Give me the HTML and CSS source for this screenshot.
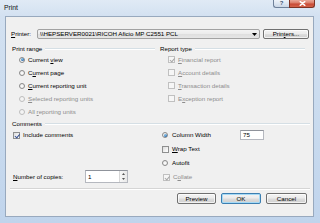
FILE: index.html
```html
<!DOCTYPE html>
<html>
<head>
<meta charset="utf-8">
<title>Print</title>
<link rel="stylesheet" href="styles.css">
</head>
<body>
<div class="window">
  <div class="titlebar">
    <span class="title">Print</span>
    <div class="caption">
      <span class="cap-btn help">?</span>
      <span class="cap-btn close"><svg class="close-x" width="7" height="5" viewBox="0 0 7 5"><path d="M1.2 0.6 L5.8 4.4 M5.8 0.6 L1.2 4.4" stroke="#fff" stroke-width="1.4" stroke-linecap="round"/></svg></span>
    </div>
  </div>
  <div class="client">
    <div class="printer-row">
      <span class="printer-label"><u>P</u>rinter:</span>
      <div class="combo">
        <span class="combo-text">\\HEPSERVER0021\RICOH Aficio MP C2551 PCL</span>
        <svg class="combo-arrow" width="5" height="3" viewBox="0 0 5 3"><path d="M0 0 H5 L2.5 3 Z" fill="#000"/></svg>
      </div>
      <span class="btn btn-printers">Prin<u>t</u>ers...</span>
    </div>

    <div class="groups">
      <div class="group group-range">
        <div class="group-head"><span class="head-label">Print range</span><span class="rule"></span></div>
        <div class="opt"><span class="radio on"></span><span>Current <u>v</u>iew</span></div>
        <div class="opt"><span class="radio"></span><span>C<u>u</u>rrent page</span></div>
        <div class="opt"><span class="radio"></span><span><u>C</u>urrent reporting unit</span></div>
        <div class="opt dis"><span class="radio"></span><span><u>S</u>elected reporting units</span></div>
        <div class="opt dis"><span class="radio"></span><span>All <u>r</u>eporting units</span></div>
      </div>
      <div class="group group-type">
        <div class="group-head"><span class="head-label">Report type</span><span class="rule"></span></div>
        <div class="opt dis"><span class="check on"></span><span><u>F</u>inancial report</span></div>
        <div class="opt dis"><span class="check"></span><span><u>A</u>ccount details</span></div>
        <div class="opt dis"><span class="check"></span><span><u>T</u>ransaction details</span></div>
        <div class="opt dis"><span class="check"></span><span>E<u>x</u>ception report</span></div>
      </div>
    </div>

    <div class="group-head comments-head"><span class="head-label">Comments</span><span class="rule"></span></div>
    <div class="comments">
      <div class="cell include"><span class="check on"></span><span>Include comments</span></div>
      <div class="cell colwidth"><span class="radio on"></span><span class="colwidth-label">Column Width</span><span class="field">75</span></div>
      <div class="cell wrap"><span class="check"></span><span><u>W</u>rap Text</span></div>
      <div class="cell autofit"><span class="radio"></span><span>Autofit</span></div>
      <div class="cell copies"><span class="copies-label"><u>N</u>umber of copies:</span>
        <span class="spin"><span class="spin-value">1</span><span class="spin-btns">
          <svg width="3" height="2" viewBox="0 0 3 2"><path d="M0 2 H3 L1.5 0 Z" fill="#555"/></svg>
          <svg width="3" height="2" viewBox="0 0 3 2"><path d="M0 0 H3 L1.5 2 Z" fill="#555"/></svg>
        </span></span>
      </div>
      <div class="cell collate dis"><span class="check on"></span><span>C<u>o</u>llate</span></div>
    </div>

    <div class="separator"></div>
    <div class="buttons">
      <span class="btn btn-preview">Preview</span>
      <span class="btn btn-ok">OK</span>
      <span class="btn btn-cancel">Cancel</span>
    </div>
  </div>
</div>
</body>
</html>
```

FILE: styles.css
```css
* { box-sizing: border-box; }

html, body {
  margin: 0;
  padding: 0;
}

body {
  width: 320px;
  height: 223px;
  overflow: hidden;
  font-family: "Liberation Sans", Arial, sans-serif;
  font-size: 6.2px;
  line-height: 8px;
  color: #000;
}

u { text-decoration: underline; text-underline-offset: 1px; }

.window {
  width: 320px;
  height: 223px;
  display: flex;
  flex-direction: column;
  background: linear-gradient(to bottom, #e0eaf5 0px, #d3e1f1 16px, #c8daee 60%, #c0d4ec 100%);
}

.titlebar {
  height: 16px;
  flex: none;
  display: flex;
  align-items: flex-start;
  padding-left: 4px;
}

.title {
  font-size: 6.8px;
  line-height: 8px;
  margin-top: 4px;
  color: #111;
}

.caption {
  margin-left: auto;
  margin-right: 5px;
  display: flex;
}

.cap-btn {
  height: 8px;
  display: flex;
  align-items: center;
  justify-content: center;
  border: 1px solid #6f819a;
  border-top: none;
}

.help {
  width: 16px;
  border-right: none;
  border-radius: 0 0 0 3px;
  background: linear-gradient(to bottom, #eef3f9 0%, #dde6f1 50%, #cbd7e6 100%);
  color: #3e5573;
  font-size: 6px;
  font-weight: bold;
  line-height: 7px;
}

.close {
  width: 26px;
  border-color: #7d3325;
  border-radius: 0 0 3px 0;
  background: linear-gradient(to bottom, #e9a899 0%, #db7a66 45%, #c84a35 55%, #d4624a 100%);
}

.close-x { display: block; }

.client {
  flex: 1;
  margin: 0 6px 6px 5px;
  background: #f0f0f0;
  border: 1px solid #98a9be;
  padding: 12px 3px 0 5px;
  display: flex;
  flex-direction: column;
}

/* printer row */
.printer-row {
  display: flex;
  align-items: center;
  height: 10px;
}

.printer-label {
  width: 26px;
  flex: none;
}

.combo {
  width: 223px;
  height: 10px;
  flex: none;
  display: flex;
  align-items: center;
  border: 1px solid #a2a2a2;
  border-radius: 2px;
  background: linear-gradient(to bottom, #f3f3f3 0%, #ebebeb 50%, #dedede 51%, #e6e6e6 100%);
  padding-left: 2px;
}

.combo-text {
  flex: 1;
  white-space: nowrap;
  overflow: hidden;
}

.combo-arrow {
  margin-right: 2px;
  flex: none;
}

.btn {
  height: 11px;
  display: flex;
  align-items: center;
  justify-content: center;
  border: 1px solid #707070;
  border-radius: 2px;
  background: linear-gradient(to bottom, #f3f3f3 0%, #ebebeb 48%, #dddddd 52%, #cfcfcf 100%);
  box-shadow: inset 0 0 0 1px rgba(255,255,255,0.7);
  flex: none;
}

.btn-printers {
  width: 46px;
  height: 10px;
  margin-left: 3px;
}

/* groups */
.groups {
  margin-top: 6px;
  display: grid;
  grid-template-columns: 149px 1fr;
}

.group-range { padding-right: 5px; }
.group-type { padding-right: 5px; }

.group-head {
  display: flex;
  align-items: center;
  height: 8px;
  gap: 3px;
}

.group-range .head-label,
.comments-head .head-label { padding-left: 1px; }

.rule {
  flex: 1;
  height: 2px;
  border-top: 1px solid #d5dfe5;
  border-bottom: 1px solid #ffffff;
}

.opt {
  display: flex;
  align-items: center;
  height: 13px;
  padding-left: 8px;
  gap: 3px;
  white-space: nowrap;
}

.dis { color: #8d8d8d; }

.radio {
  width: 6px;
  height: 6px;
  flex: none;
  border-radius: 50%;
  border: 1px solid #8a8a8a;
  background: radial-gradient(circle at 50% 60%, #ffffff 0%, #e3e3e3 100%);
  display: flex;
  align-items: center;
  justify-content: center;
}

.radio.on::after {
  content: "";
  width: 3px;
  height: 3px;
  border-radius: 50%;
  background: radial-gradient(circle at 40% 35%, #8fd1f7 0%, #2f6aa8 70%, #1d4f86 100%);
}

.dis .radio {
  border-color: #bdbdbd;
  background: #f4f4f4;
}

.check {
  width: 7px;
  height: 7px;
  flex: none;
  border: 1px solid #8e8f8f;
  background: linear-gradient(135deg, #dcdcdc 0%, #f6f6f6 70%, #ffffff 100%);
  position: relative;
}

.check.on::after {
  content: "";
  position: absolute;
  left: 1.5px;
  top: 0px;
  width: 1.6px;
  height: 3.6px;
  border-right: 1.2px solid #3b5595;
  border-bottom: 1.2px solid #3b5595;
  transform: rotate(40deg);
}

.dis .check {
  border-color: #c0c0c0;
  background: #f6f6f6;
}

.dis .check.on::after {
  border-color: #a8a8a8;
}

/* comments */
.comments-head {
  margin-top: 2px;
}

.comments {
  display: grid;
  grid-template-columns: 151px 1fr;
  grid-template-rows: repeat(4, 14px);
}

.cell {
  display: flex;
  align-items: center;
  gap: 3px;
  white-space: nowrap;
}

.include { grid-column: 1; grid-row: 1; padding-left: 2px; }
.colwidth { grid-column: 2; grid-row: 1; gap: 4px; }
.wrap { grid-column: 2; grid-row: 2; }
.autofit { grid-column: 2; grid-row: 3; gap: 4px; }
.copies { grid-column: 1; grid-row: 4; padding-left: 2px; gap: 0; }
.collate { grid-column: 2; grid-row: 4; padding-left: 1px; }

.colwidth-label { width: 64px; }

.field {
  width: 24px;
  height: 10px;
  background: #fff;
  border: 1px solid #b5b8bf;
  border-top-color: #8f939b;
  padding-left: 2px;
  display: flex;
  align-items: center;
}

.copies-label { width: 72px; }

.spin {
  width: 43px;
  height: 13px;
  display: flex;
  background: #fff;
  border: 1px solid #b5b8bf;
  border-top-color: #8f939b;
  align-self: flex-start;
}

.spin-value {
  flex: 1;
  padding-left: 2px;
  display: flex;
  align-items: center;
}

.spin-btns {
  width: 8px;
  display: flex;
  flex-direction: column;
  align-items: center;
  justify-content: space-around;
  padding: 1px 0;
  background: linear-gradient(to right, #f7f7f7, #e9e9e9);
  border-left: 1px solid #d8d8d8;
}

.spin-btns svg { display: block; }

.separator {
  margin-top: 4px;
  margin-left: -1px;
  height: 2px;
  border-top: 1px solid #d5d5d5;
  border-bottom: 1px solid #ffffff;
}

.buttons {
  margin-top: 3px;
  display: flex;
  justify-content: flex-end;
  gap: 5px;
  padding-right: 3px;
}

.btn-preview { width: 39px; }
.btn-ok {
  width: 40px;
  border-color: #3c7fb1;
  box-shadow: inset 0 0 0 1px #a6daf6;
}
.btn-cancel { width: 41px; }
```
